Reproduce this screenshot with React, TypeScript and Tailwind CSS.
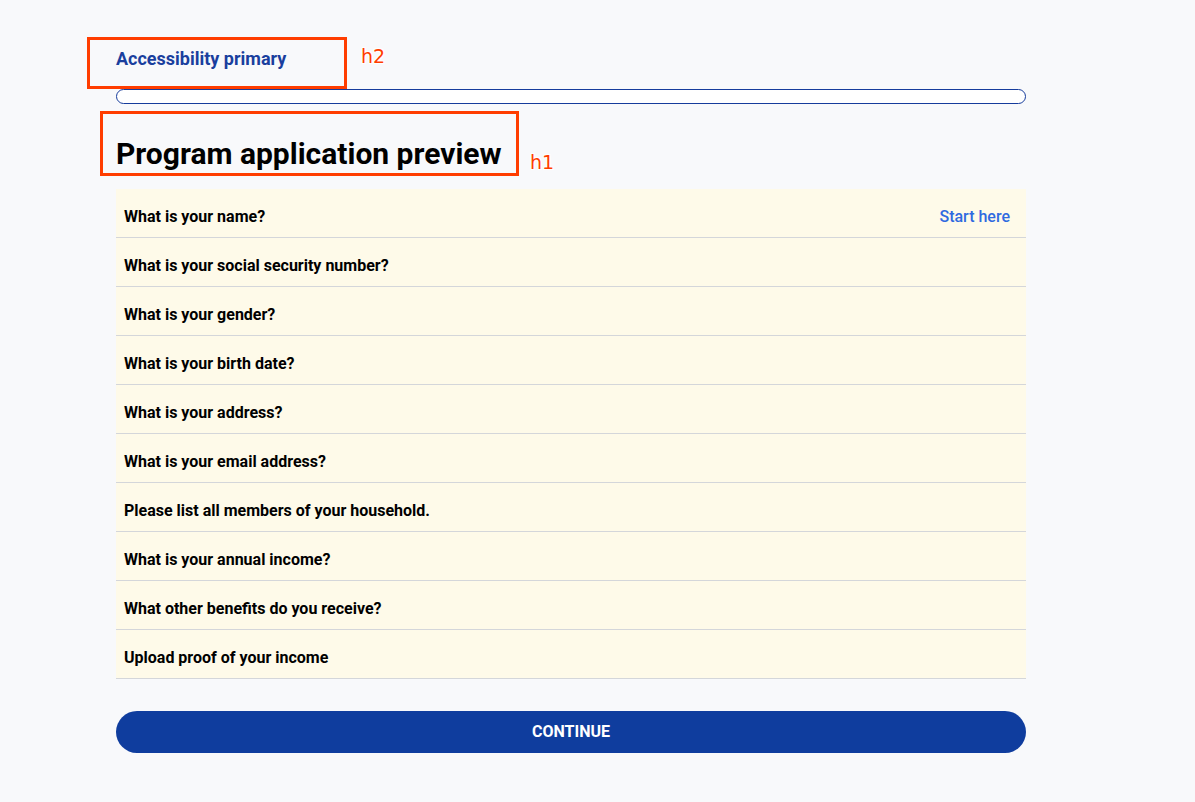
import React from "react";

const questions = [
    "What is your name?",
    "What is your social security number?",
    "What is your gender?",
    "What is your birth date?",
    "What is your address?",
    "What is your email address?",
    "Please list all members of your household.",
    "What is your annual income?",
    "What other benefits do you receive?",
    "Upload proof of your income",
];

function Annotation({ label, className }: { label: string; className: string }) {
    return (
        <span
            className={`absolute text-[19px] leading-[22px] text-[#ff3d00] [text-shadow:1px_1px_0_#fff,-1px_-1px_0_#fff,1px_-1px_0_#fff,-1px_1px_0_#fff] ${className}`}
            style={{ fontFamily: '"DejaVu Sans", sans-serif' }}
        >
            {label}
        </span>
    );
}

export default function App() {
    return (
        <div
            className="min-h-screen bg-[#f8f9fb] text-black"
            style={{ fontFamily: "Roboto, sans-serif" }}
        >
            <div className="ml-[116px] w-[910px] pt-[47px]">
                <div className="relative">
                    <h2 className="h-[24px] text-[18px] font-bold leading-[24px] text-[#1a3f9e]">
                        Accessibility primary
                    </h2>
                    <div className="pointer-events-none absolute left-[-29px] top-[-10px] h-[52px] w-[260px] border-[3px] border-[#ff3d00]" />
                    <Annotation label="h2" className="left-[245px] top-[-2px]" />
                </div>

                <div className="mt-[18px] h-[15px] rounded-full border border-[#163c9c] bg-white" />

                <div className="relative pt-[32px] pb-[17px]">
                    <h1 className="text-[30px] font-bold leading-[36px]">
                        Program application preview
                    </h1>
                    <div className="pointer-events-none absolute left-[-16px] top-[7px] h-[65px] w-[419px] border-[3px] border-[#ff3d00]" />
                    <Annotation label="h1" className="left-[414px] top-[47px]" />
                </div>

                <ul className="bg-[#fefae9]">
                    {questions.map((q, i) => (
                        <li
                            key={q}
                            className="flex h-[49px] items-center justify-between border-b border-[#d4d6da] pt-[7px] pl-[8px] pr-[16px]"
                        >
                            <span className="text-[16px] font-bold">{q}</span>
                            {i === 0 && (
                                <a className="text-[16px] font-medium text-[#2f6ae0]">
                                    Start here
                                </a>
                            )}
                        </li>
                    ))}
                </ul>

                <button className="mt-[32px] flex h-[42px] w-full items-center justify-center rounded-full bg-[#0f3d9e] text-[16px] font-bold text-white">
                    CONTINUE
                </button>
            </div>
        </div>
    );
}
